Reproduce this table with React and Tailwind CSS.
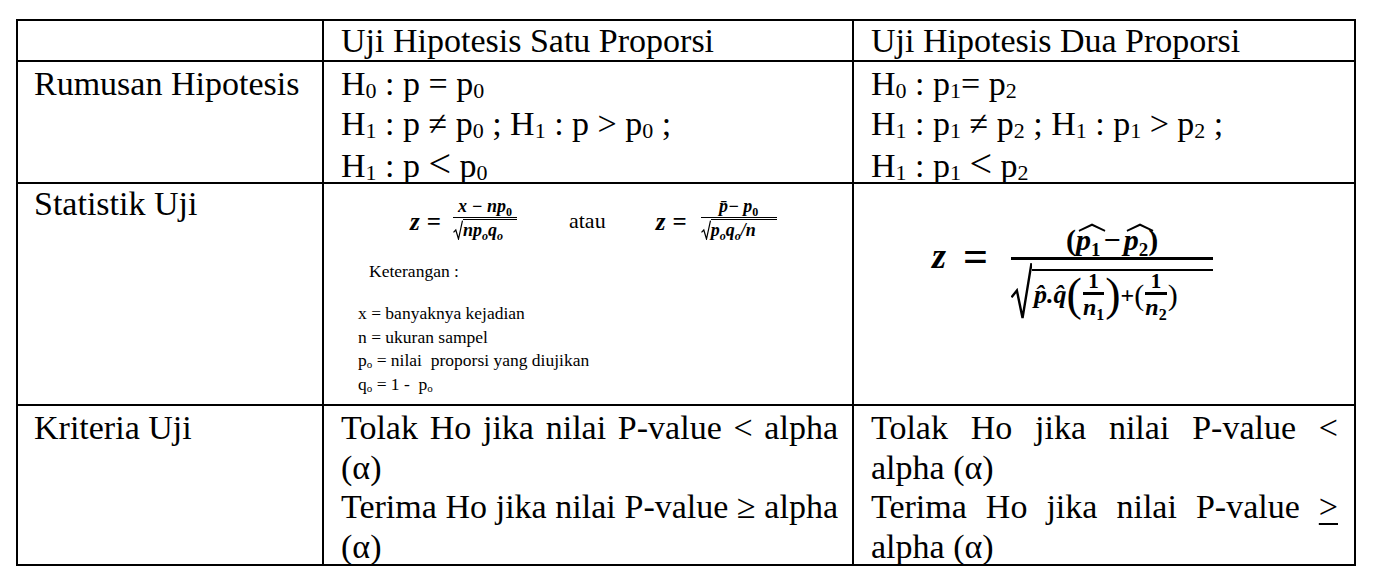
import React from 'react';

const Sub = ({ children }) => (
  <span className="relative top-[3px] text-[22px] leading-none">{children}</span>
);

function Radical({ w, h, stroke = 1.4 }) {
  return (
    <svg width={w} height={h} viewBox={`0 0 ${w} ${h}`} className="shrink-0 block">
      <path
        d={`M0.5 ${h * 0.62} L${w * 0.28} ${h * 0.5} L${w * 0.55} ${h - 1} L${w - 0.5} ${stroke / 2}`}
        fill="none"
        stroke="black"
        strokeWidth={stroke}
        strokeLinejoin="miter"
      />
    </svg>
  );
}

function WideHat({ className }) {
  return (
    <svg viewBox="0 0 30 8" preserveAspectRatio="none" className={className}>
      <path d="M1 7 L15 1.5 L29 7" fill="none" stroke="black" strokeWidth="1.8" />
    </svg>
  );
}

const s = 'text-[12px] relative top-[4px] leading-none';

function SmallFormulas() {
  return (
    <div className="flex flex-col">
      <div className="flex items-center h-[72px] pl-[86px] pt-[2px]">
        <span className="italic font-bold text-[25px] leading-none">z</span>
        <span className="font-bold text-[25px] leading-none ml-[7px] mr-[12px]">=</span>
        <div className="flex flex-col items-stretch w-[64px] -mt-[6px]">
          <div className="text-center text-[18px] italic font-bold leading-[20px]">
            x − np<span className={`not-italic ${s}`}>0</span>
          </div>
          <div className="h-[1.5px] bg-black my-[1px]" />
          <div className="flex items-end leading-[20px] text-[18px] italic font-bold">
            <Radical w={10} h={20} stroke={1.2} />
            <span className="flex-1 border-t-[1.5px] border-black">
              np<span className={s}>o</span>q<span className={s}>o</span>
            </span>
          </div>
        </div>
        <span className="text-[22px] leading-none ml-[52px] mr-[50px]">atau</span>
        <span className="italic font-bold text-[25px] leading-none">z</span>
        <span className="font-bold text-[25px] leading-none ml-[7px] mr-[14px]">=</span>
        <div className="flex flex-col items-stretch w-[76px] -mt-[6px]">
          <div className="text-center text-[18px] italic font-bold leading-[20px]">
            p̄− p<span className={`not-italic ${s}`}>0</span>
          </div>
          <div className="h-[1.5px] bg-black my-[1px]" />
          <div className="flex items-end leading-[20px] text-[18px] italic font-bold">
            <Radical w={10} h={20} stroke={1.2} />
            <span className="flex-1 border-t-[1.5px] border-black">
              p<span className={s}>o</span>q<span className={s}>o</span>/n
            </span>
          </div>
        </div>
      </div>
      <div className="pl-[45px] mt-[5px] text-[17.5px] leading-[20px]">Keterangan :</div>
      <div className="pl-[34px] mt-[21px] text-[17.5px] leading-[23.5px]">
        <div>x = banyaknya kejadian</div>
        <div>n = ukuran sampel</div>
        <div>
          p<span className="text-[11px] relative top-[2px] leading-none">o</span> = nilai&nbsp; proporsi yang diujikan
        </div>
        <div>
          q<span className="text-[11px] relative top-[2px] leading-none">o</span> = 1 -&nbsp; p
          <span className="text-[11px] relative top-[2px] leading-none">o</span>
        </div>
      </div>
    </div>
  );
}

function SmallFrac({ sub }) {
  return (
    <span className="inline-flex flex-col items-stretch mx-[1px]">
      <span className="text-center text-[21px] leading-[21px] not-italic">1</span>
      <span className="h-[2.5px] bg-black" />
      <span className="text-center text-[24px] leading-[24px] italic">
        n<span className="not-italic text-[16px] relative top-[5px] leading-none">{sub}</span>
      </span>
    </span>
  );
}

function BigFormula() {
  return (
    <div className="flex items-start pl-[78px] pt-[40px] font-bold">
      <span className="italic text-[36px] leading-none mt-[14px]">z</span>
      <span className="text-[44px] leading-none mt-[11px] ml-[17px] mr-[23px]">=</span>
      <div className="flex flex-col items-stretch w-[202px]">
        <div className="text-center text-[30px] leading-[32px] pl-[30px] pr-[30px]">
          (
          <span className="relative inline-block italic">
            p<span className="not-italic text-[19px] relative top-[6px] leading-none">1</span>
            <WideHat className="absolute left-[2px] top-[-1px] w-[28px] h-[9px]" />
          </span>
          <span className="mx-[3px]">−</span>
          <span className="relative inline-block italic">
            p<span className="not-italic text-[19px] relative top-[6px] leading-none">2</span>
            <WideHat className="absolute left-[2px] top-[-1px] w-[28px] h-[9px]" />
          </span>
          )
        </div>
        <div className="h-[2.5px] bg-black mt-[1px]" />
        <div className="flex items-end mt-[2px]">
          <Radical w={21} h={57} stroke={2.4} />
          <div className="flex-1 border-t-[2.5px] border-black flex items-center text-[26px] leading-none">
            <span className="italic ml-[2px]">p̂.q̂</span>
            <span className="text-[46px] font-normal leading-none">(</span>
            <SmallFrac sub="1" />
            <span className="text-[46px] font-normal leading-none">)</span>
            <span className="text-[24px]">+</span>
            <span className="text-[30px] font-normal leading-none">(</span>
            <SmallFrac sub="2" />
            <span className="text-[30px] font-normal leading-none">)</span>
          </div>
        </div>
      </div>
    </div>
  );
}

export default function App() {
  return (
    <div className="w-[1373px] h-[584px] bg-white pt-[19px] pl-[16px] text-black font-['Liberation_Serif','Times_New_Roman',serif]">
      <div className="grid grid-cols-[304px_528px_500px] grid-rows-[39px_120px_220px_158px] gap-[2px] bg-black p-[2px] w-fit text-[34px] leading-[40px]">
        {/* header */}
        <div className="bg-white" />
        <div className="bg-white pl-[17px]">Uji Hipotesis Satu Proporsi</div>
        <div className="bg-white pl-[17px]">Uji Hipotesis Dua Proporsi</div>

        {/* rumusan */}
        <div className="bg-white pl-[16px] pt-[2px]">Rumusan Hipotesis</div>
        <div className="bg-white pl-[17px] pt-[2px]">
          <div>
            H<Sub>0</Sub> : p = p<Sub>0</Sub>
          </div>
          <div>
            H<Sub>1</Sub> : p ≠ p<Sub>0</Sub> ; H<Sub>1</Sub> : p &gt; p<Sub>0</Sub> ;
          </div>
          <div>
            H<Sub>1</Sub> : p <span className="text-[40px] leading-none">&lt;</span> p<Sub>0</Sub>
          </div>
        </div>
        <div className="bg-white pl-[17px] pt-[2px]">
          <div>
            H<Sub>0</Sub> : p<Sub>1</Sub>= p<Sub>2</Sub>
          </div>
          <div>
            H<Sub>1</Sub> : p<Sub>1</Sub> ≠ p<Sub>2</Sub> ; H<Sub>1</Sub> : p<Sub>1</Sub> &gt; p<Sub>2</Sub> ;
          </div>
          <div>
            H<Sub>1</Sub> : p<Sub>1</Sub> <span className="text-[40px] leading-none">&lt;</span> p<Sub>2</Sub>
          </div>
        </div>

        {/* statistik */}
        <div className="bg-white pl-[16px]">Statistik Uji</div>
        <div className="bg-white">
          <SmallFormulas />
        </div>
        <div className="bg-white">
          <BigFormula />
        </div>

        {/* kriteria */}
        <div className="bg-white pl-[16px] pt-[2px]">Kriteria Uji</div>
        <div className="bg-white pl-[17px] pr-[14px] pt-[2px] leading-[39.5px]">
          <div className="text-justify [text-align-last:justify]">Tolak Ho jika nilai P-value &lt; alpha</div>
          <div>(α)</div>
          <div className="text-justify [text-align-last:justify] [word-spacing:-2px] whitespace-nowrap">
            Terima Ho jika nilai P-value ≥ alpha
          </div>
          <div>(α)</div>
        </div>
        <div className="bg-white pl-[17px] pr-[16px] pt-[2px] leading-[39.5px]">
          <div className="text-justify [text-align-last:justify]">Tolak Ho jika nilai P-value &lt;</div>
          <div>alpha (α)</div>
          <div className="text-justify [text-align-last:justify]">
            Terima Ho jika nilai P-value <span className="underline underline-offset-[5px] decoration-[2px]">&gt;</span>
          </div>
          <div>alpha (α)</div>
        </div>
      </div>
    </div>
  );
}
